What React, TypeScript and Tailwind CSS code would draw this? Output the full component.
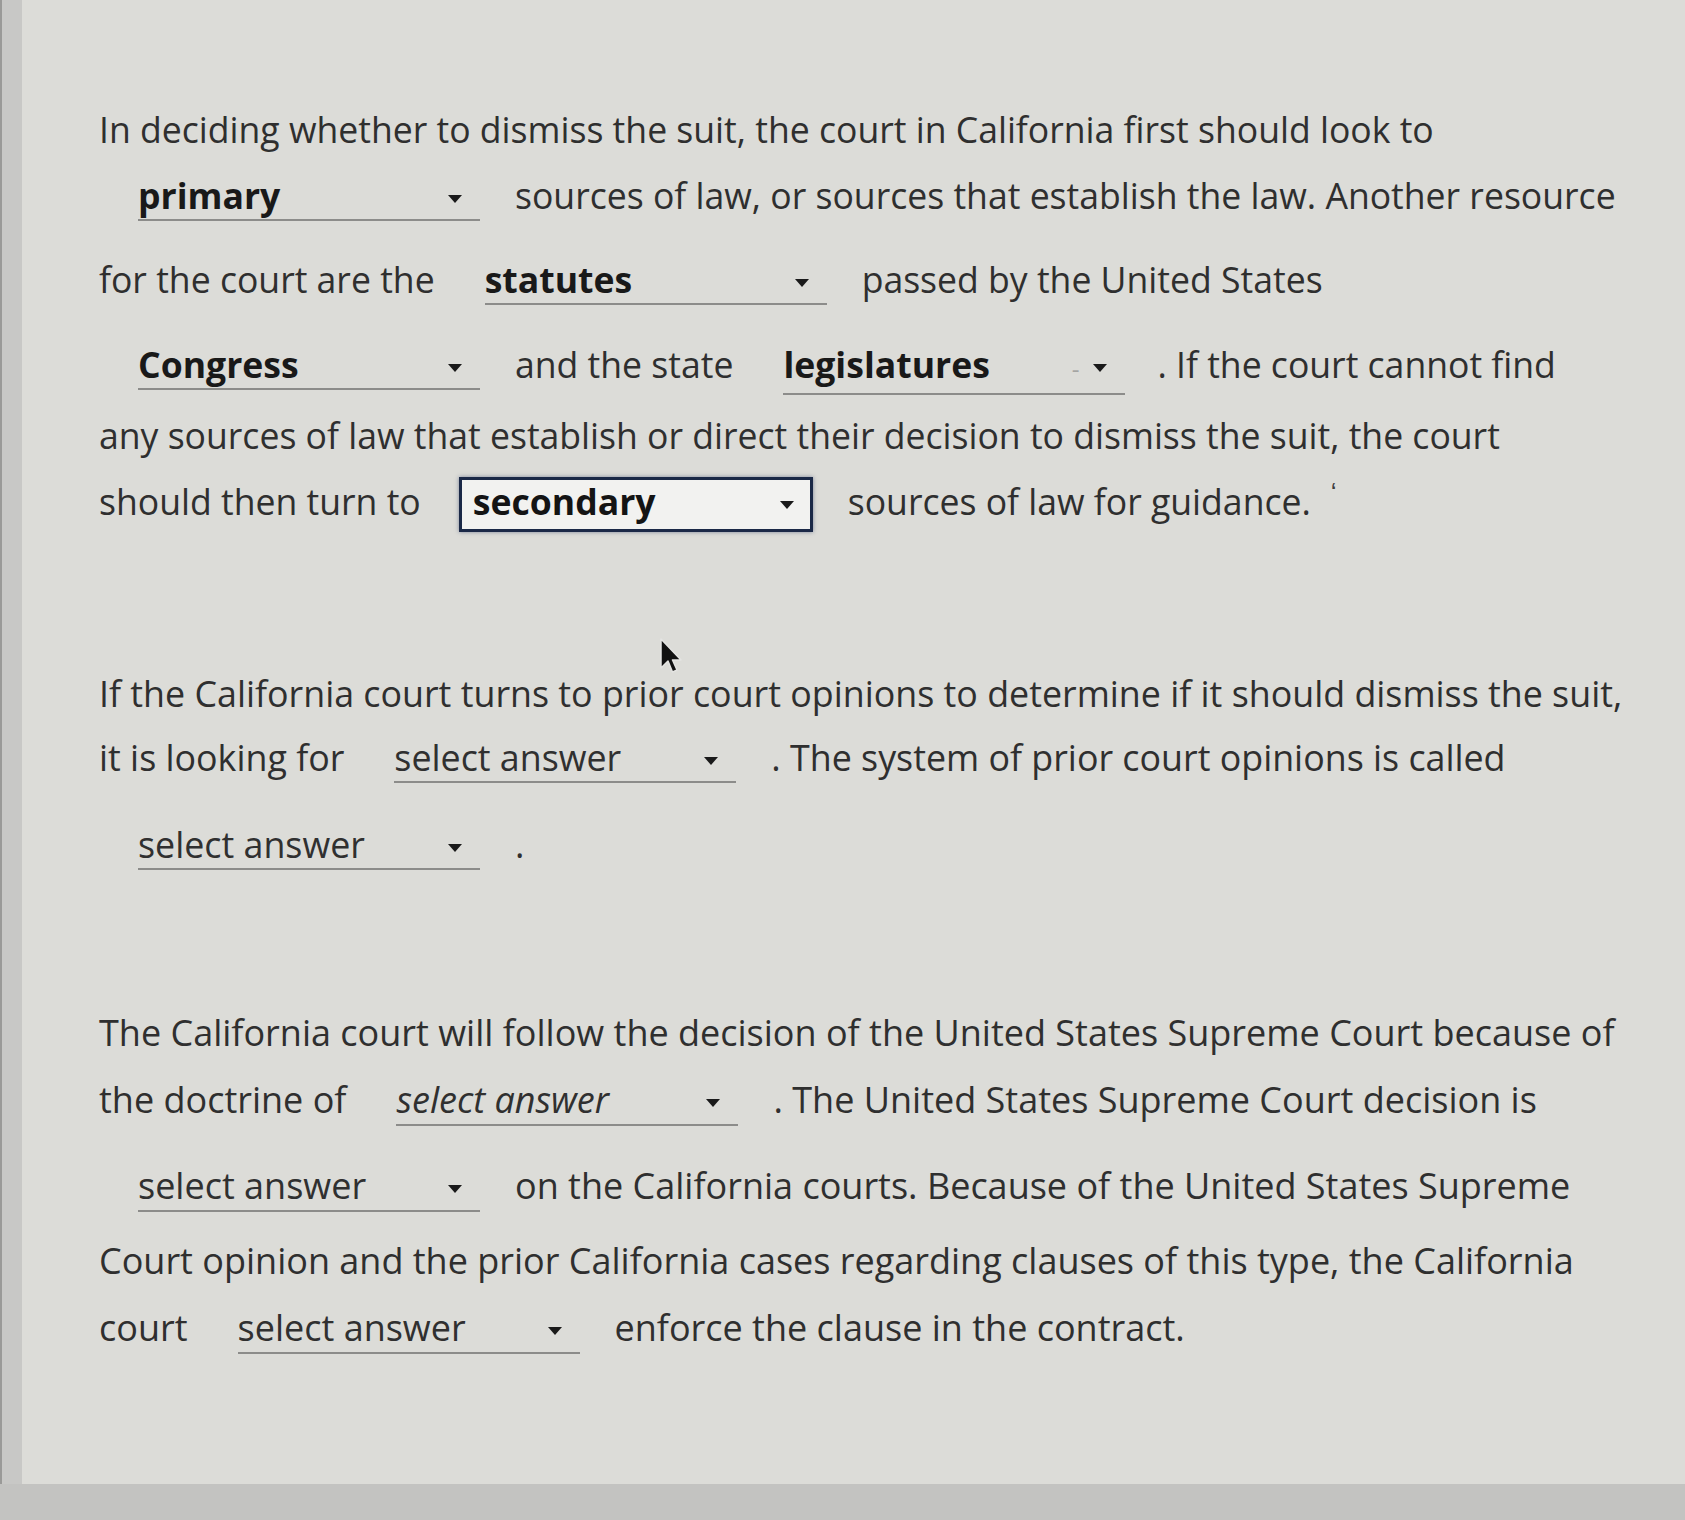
import React from "react";

type DropProps = { label: string; bold?: boolean; italic?: boolean; start?: boolean; dash?: boolean };

function Arrow() {
  return (
    <svg className="inline-block align-middle" width="14" height="8" viewBox="0 0 14 8">
      <path d="M0 0H14L7 8Z" fill="#1a1a1a" />
    </svg>
  );
}

function Drop({ label, bold, italic, start, dash }: DropProps) {
  return (
    <span
      className={`flex items-baseline w-[342px] shrink-0 border-b-2 border-[#8c8c8a] pb-[2px] ${start ? "ml-[39px]" : "ml-[50px]"}`}
    >
      <span
        className={`flex-1 whitespace-nowrap ${bold ? "font-bold text-[#191919]" : "text-[#303030]"} ${italic ? "italic" : ""}`}
      >
        {label}
      </span>
      {dash ? <span className="mr-[14px] text-[#a5a5a3] text-[24px]">-</span> : null}
      <span className="mr-[18px]">
        <Arrow />
      </span>
    </span>
  );
}

function T({ children, after }: { children: React.ReactNode; after?: boolean }) {
  return <span className={`whitespace-nowrap ${after ? "ml-[35px]" : ""}`}>{children}</span>;
}

export default function App() {
  return (
    <div className="relative w-[1685px] h-[1520px] flex flex-col bg-[#c3c3c1] font-['Open_Sans',sans-serif] text-[#2f2f2f] overflow-hidden">
      <div className="flex h-[1484px]">
        <div className="w-[22px] bg-[#c8c8c6] border-l-[2px] border-[#9a9a98]" />
        <div className="flex-1 bg-[#dcdcd8] pl-[77px] pt-[107px] leading-[44px]">
          {/* Paragraph 1 */}
          <div className="text-[35.6px]">
            <div className="flex items-baseline h-[66px]">
              <T>In deciding whether to dismiss the suit, the court in California first should look to</T>
            </div>
            <div className="flex items-baseline h-[84px]">
              <Drop label="primary" bold start />
              <T after>sources of law, or sources that establish the law. Another resource</T>
            </div>
            <div className="flex items-baseline h-[85px]">
              <T>for the court are the</T>
              <Drop label="statutes" bold />
              <T after>passed by the United States</T>
            </div>
            <div className="flex items-baseline h-[71px]">
              <Drop label="Congress" bold start />
              <T after>and the state</T>
              <Drop label="legislatures" bold dash />
              <span className="whitespace-nowrap ml-[32px]">. If the court cannot find</span>
            </div>
            <div className="flex items-baseline h-[64px]">
              <T>any sources of law that establish or direct their decision to dismiss the suit, the court</T>
            </div>
            <div className="flex items-baseline h-[55px]">
              <T>should then turn to</T>
              <span className="flex items-start w-[354px] h-[55px] shrink-0 ml-[38px] border-[3px] border-[#1b2947] bg-[#f2f2f0] pl-[11px] shadow-[0_0_4px_rgba(29,43,90,0.5)]">
                <span className="flex-1 leading-[42px] font-bold text-[#141414] whitespace-nowrap">secondary</span>
                <span className="leading-[42px] mr-[16px]">
                  <Arrow />
                </span>
              </span>
              <T after>sources of law for guidance.</T>
              <span className="ml-[20px] text-[26px] text-[#3c3c3c] self-start leading-[30px]">ʻ</span>
            </div>
          </div>

          {/* Paragraph 2 */}
          <div className="mt-[139px] text-[35.8px]">
            <div className="flex items-baseline h-[64px]">
              <T>If the California court turns to prior court opinions to determine if it should dismiss the suit,</T>
            </div>
            <div className="flex items-baseline h-[87px]">
              <T>it is looking for</T>
              <Drop label="select answer" />
              <T after>. The system of prior court opinions is called</T>
            </div>
            <div className="flex items-baseline h-[44px]">
              <Drop label="select answer" start />
              <T after>.</T>
            </div>
          </div>

          {/* Paragraph 3 */}
          <div className="mt-[145px] text-[36px]">
            <div className="flex items-baseline h-[67px]">
              <T>The California court will follow the decision of the United States Supreme Court because of</T>
            </div>
            <div className="flex items-baseline h-[86px]">
              <T>the doctrine of</T>
              <Drop label="select answer" italic />
              <T after>. The United States Supreme Court decision is</T>
            </div>
            <div className="flex items-baseline h-[75px]">
              <Drop label="select answer" start />
              <T after>on the California courts. Because of the United States Supreme</T>
            </div>
            <div className="flex items-baseline h-[67px]">
              <T>Court opinion and the prior California cases regarding clauses of this type, the California</T>
            </div>
            <div className="flex items-baseline h-[44px]">
              <T>court</T>
              <Drop label="select answer" />
              <T after>enforce the clause in the contract.</T>
            </div>
          </div>
        </div>
      </div>
      <div className="flex-1 bg-[#c3c3c1]" />

      {/* mouse cursor */}
      <svg className="absolute left-[659px] top-[638px]" width="24" height="38" viewBox="0 0 24 38">
        <path d="M2 1 L2 30 L9 23 L13.5 34 L18 32 L13.5 22 L22 22 Z" fill="#111" stroke="#e4e4e2" strokeWidth="1.5" strokeLinejoin="round" />
      </svg>
    </div>
  );
}
